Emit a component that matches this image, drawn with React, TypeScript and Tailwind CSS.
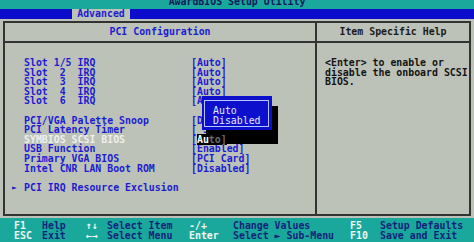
const rows: { label: string; value: string; gap?: boolean; active?: boolean }[] = [
  { label: "Slot 1/5 IRQ", value: "[Auto]" },
  { label: "Slot  2  IRQ", value: "[Auto]" },
  { label: "Slot  3  IRQ", value: "[Auto]" },
  { label: "Slot  4  IRQ", value: "[Auto]" },
  { label: "Slot  6  IRQ", value: "[Auto]" },
  { label: "", value: "", gap: true },
  { label: "PCI/VGA Palette Snoop", value: "[Disabled]" },
  { label: "PCI Latency Timer", value: "[ 32]" },
  { label: "SYMBIOS SCSI BIOS", value: "[Auto]", active: true },
  { label: "USB Function", value: "[Enabled]" },
  { label: "Primary VGA BIOS", value: "[PCI Card]" },
  { label: "Intel CNR LAN Boot ROM", value: "[Disabled]" },
];

const keys = [
  ["F1", "Help", "↑↓", "Select Item", "-/+", "Change Values", "F5", "Setup Defaults"],
  ["ESC", "Exit", "←→", "Select Menu", "Enter", "Select ► Sub-Menu", "F10", "Save and Exit"],
];
const widths = ["w-[28px]", "w-[44px]", "w-[21px]", "w-[82px]", "w-[44px]", "w-[117px]", "w-[30px]", "w-[90px]"];

export default function App() {
  return (
    <div className="w-[474px] h-[242px] flex flex-col bg-[#bcc2b8] font-['DejaVu_Sans_Mono',monospace] text-[9.9px] leading-[9.6px] font-bold overflow-hidden">
      <div className="h-[9px] bg-[#1ba89c] overflow-hidden flex justify-center">
        <span className="-mt-[3px] text-[#0c1a5c] whitespace-pre">AwardBIOS Setup Utility</span>
      </div>
      <div className="h-[10px] bg-[#0c0ccc] flex">
        <div className="ml-[72px] w-[58px] bg-[#bcc2b8] text-[#1c1cd0] flex items-center justify-center">
          Advanced
        </div>
      </div>
      <div className="flex-1 pt-[2px] pb-[2px] pl-[3px] pr-[3px]">
        <div className="h-full border-2 border-[#333] flex">
          <div className="w-[312px] border-r-2 border-[#333] flex flex-col">
            <div className="h-[20px] border-b-2 border-[#333] flex items-center justify-center text-[#1c1cd0]">
              PCI Configuration
            </div>
            <div className="relative flex-1 pl-[19px] pt-[15px] text-[#1c1cd0]">
              {rows.map((r, i) =>
                r.gap ? (
                  <div key={i} className="h-[9.6px]" />
                ) : (
                  <div key={i} className="flex h-[9.6px] whitespace-pre">
                    <span className={`w-[167px] ${r.active ? "text-[#eef0ee]" : ""}`}>{r.label}</span>
                    {r.active ? (
                      <span className="relative z-20">
                        <span>[</span>
                        <span className="bg-black text-white">Au</span>
                        <span className="bg-black text-[#6a6a6a]">to]</span>
                      </span>
                    ) : (
                      <span>{r.value}</span>
                    )}
                  </div>
                )
              )}
              <div className="h-[9.6px]" />
              <div className="flex h-[9.6px] whitespace-pre">
                <span className="w-[12px] -ml-[12px] text-[8px]">►</span>
                <span>PCI IRQ Resource Exclusion</span>
              </div>
              <div className="absolute left-[201px] top-[63px] w-[72px] h-[38px] bg-black z-10" />
              <div className="absolute left-[197px] top-[53px] w-[70px] h-[34px] bg-[#0c10cc] z-30">
                <div className="absolute left-[2px] top-[4px] right-[3px] bottom-[3px] border border-[#b8c4ff]" />
                <div className="absolute left-[11px] top-[10px] font-normal text-[#e4e8ff] whitespace-pre">
                  <div className="h-[9.6px]">Auto</div>
                  <div className="h-[9.6px]">Disabled</div>
                </div>
              </div>
            </div>
          </div>
          <div className="flex-1 flex flex-col">
            <div className="h-[20px] border-b-2 border-[#333] flex items-center justify-center text-[#1a1a1a]">
              Item Specific Help
            </div>
            <div className="pl-[8px] pt-[15px] text-[#141414] whitespace-pre">
              <div className="h-[9.6px]">{"<Enter> to enable or"}</div>
              <div className="h-[9.6px]">disable the onboard SCSI</div>
              <div className="h-[9.6px]">BIOS.</div>
            </div>
          </div>
        </div>
      </div>
      <div className="h-[24px] bg-[#1ba89c] pt-[3px] pl-[14px]">
        {keys.map((row, ri) => (
          <div key={ri} className="flex h-[9.6px] whitespace-pre">
            {row.map((t, ci) => (
              <span
                key={ci}
                className={`${widths[ci]} shrink-0 ${ci % 2 === 0 ? "text-[#f2f6f2]" : "text-[#10237a]"}`}
              >
                {t}
              </span>
            ))}
          </div>
        ))}
      </div>
    </div>
  );
}
